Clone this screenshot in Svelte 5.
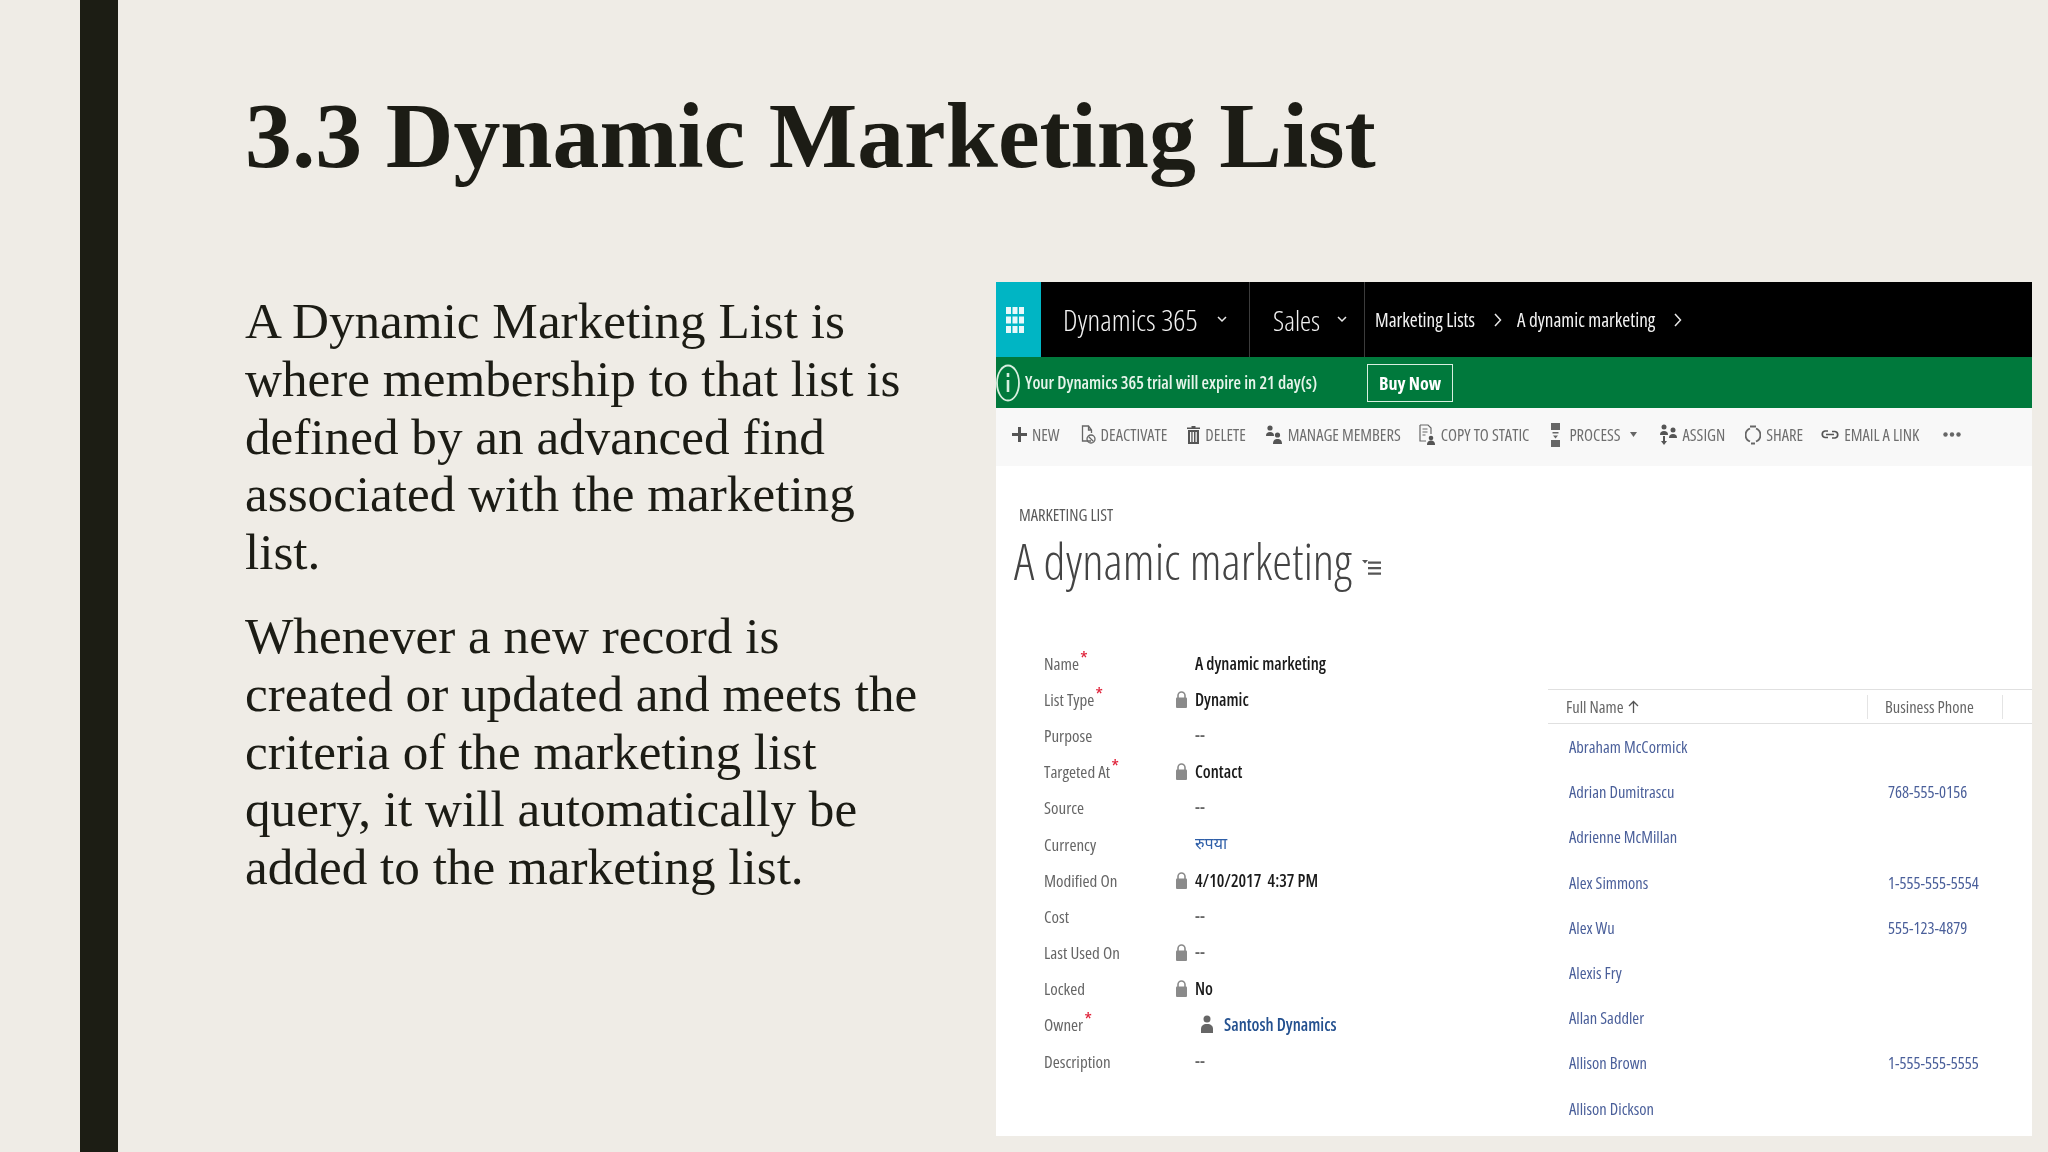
<script lang="ts">
  const fields = [
    { label: "Name", req: true, value: "A dynamic marketing", kind: "strong" },
    { label: "List Type", req: true, lock: true, value: "Dynamic", kind: "strong" },
    { label: "Purpose", value: "--", kind: "dash" },
    { label: "Targeted At", req: true, lock: true, value: "Contact", kind: "strong" },
    { label: "Source", value: "--", kind: "dash" },
    { label: "Currency", value: "रुपया", kind: "link" },
    { label: "Modified On", lock: true, value: "4/10/2017\u00a0\u00a04:37 PM", kind: "strong" },
    { label: "Cost", value: "--", kind: "dash" },
    { label: "Last Used On", lock: true, value: "--", kind: "dash" },
    { label: "Locked", lock: true, value: "No", kind: "strong" },
    { label: "Owner", req: true, value: "Santosh Dynamics", kind: "owner" },
    { label: "Description", value: "--", kind: "dash" },
  ];

  const contacts = [
    ["Abraham McCormick", ""],
    ["Adrian Dumitrascu", "768-555-0156"],
    ["Adrienne McMillan", ""],
    ["Alex Simmons", "1-555-555-5554"],
    ["Alex Wu", "555-123-4879"],
    ["Alexis Fry", ""],
    ["Allan Saddler", ""],
    ["Allison Brown", "1-555-555-5555"],
    ["Allison Dickson", ""],
  ];
</script>

<div class="page">
  <div class="bar"></div>
  <main class="slide">
    <h1>3.3 Dynamic Marketing List</h1>
    <div class="content">
      <div class="copy">
        <p>A Dynamic Marketing List is where membership to that list is defined by an advanced find associated with the marketing list.</p>
        <p>Whenever a new record is created or updated and meets the criteria of the marketing list query, it will automatically be added to the marketing list.</p>
      </div>

      <div class="shot">
        <nav class="nav">
          <div class="tile">
            <svg width="18" height="26" viewBox="0 0 18 26" fill="#e8f8fa">
              {#each [0, 9.5, 19] as y}
                {#each [0, 6.5, 13] as x}
                  <rect {x} {y} width="5" height="7" />
                {/each}
              {/each}
            </svg>
          </div>
          <div class="product">
            <span>Dynamics 365</span>
            <svg class="caret" width="10" height="7" viewBox="0 0 10 7"><path d="M1 1l4 4 4-4" /></svg>
          </div>
          <div class="area">
            <span>Sales</span>
            <svg class="caret" width="10" height="7" viewBox="0 0 10 7"><path d="M1 1l4 4 4-4" /></svg>
          </div>
          <div class="crumbs">
            <span>Marketing Lists</span>
            <svg class="chev" width="8" height="14" viewBox="0 0 8 14"><path d="M1 1l5.5 6L1 13" /></svg>
            <span>A dynamic marketing</span>
            <svg class="chev" width="8" height="14" viewBox="0 0 8 14"><path d="M1 1l5.5 6L1 13" /></svg>
          </div>
        </nav>

        <div class="notice">
          <svg width="24" height="38" viewBox="0 0 24 38" fill="none" stroke="#d8efe0">
            <ellipse cx="12" cy="19" rx="11" ry="17.5" stroke-width="1.8" />
            <path d="M12 16v12M12 9v4" stroke-width="2.6" />
          </svg>
          <span class="trial">Your Dynamics 365 trial will expire in 21 day(s)</span>
          <span class="buy">Buy Now</span>
        </div>

        <div class="toolbar">
          <div class="tool t-new">
            <svg width="15" height="15" viewBox="0 0 15 15" fill="#555"><path d="M6 0h3v6h6v3H9v6H6V9H0V6h6z" /></svg>
            <span>NEW</span>
          </div>
          <div class="tool t-deactivate">
            <svg width="15" height="20" viewBox="0 0 15 20" fill="none" stroke="#666" stroke-width="1.3"><path d="M10 16H1.500V1h6l3 4v3M7.500 1v4h3" /><circle cx="10" cy="14" r="4" /><path d="M7.500 11.500l5 5" /></svg>
            <span>DEACTIVATE</span>
          </div>
          <div class="tool t-delete">
            <svg width="13" height="18" viewBox="0 0 13 18" fill="#555"><path d="M4.500 0h4v1.500h4.500V3H0V1.500h4.500zM1 4h11v14H1zM3 6v10h1.300V6zm2.600 0v10h1.400V6zm2.900 0v10h1.300V6z" fill-rule="evenodd" /></svg>
            <span>DELETE</span>
          </div>
          <div class="tool t-manage">
            <svg width="18" height="20" viewBox="0 0 18 20" fill="#555"><circle cx="5" cy="3" r="2.600" /><path d="M1 11c0-3 1.500-4 4-4s4 1 4 4z" /><circle cx="12.500" cy="10" r="2.600" /><path d="M8 19c0-4 2-5 4.500-5s4.500 1 4.500 5z" /></svg>
            <span>MANAGE MEMBERS</span>
          </div>
          <div class="tool t-copy">
            <svg width="17" height="22" viewBox="0 0 17 22" fill="none" stroke="#666" stroke-width="1.200"><path d="M1 1h8l3 3v6M1 1v16h6M3.500 5h5M3.500 8h5M3.500 11h3" /><circle cx="12" cy="14" r="2.300" fill="#555" stroke="none" /><path d="M8 21c0-3.500 2-4.500 4-4.500s4 1 4 4.500z" fill="#555" stroke="none" /></svg>
            <span>COPY TO STATIC</span>
          </div>
          <div class="tool t-process">
            <svg width="9" height="24" viewBox="0 0 9 24" fill="#666"><rect width="9" height="7" /><rect y="17" width="9" height="7" /><rect x="1.500" y="9" width="6" height="1.500" /><path d="M4.500 15.500L2 12.500h5z" /></svg>
            <span>PROCESS</span>
            <svg class="drop" width="7" height="5" viewBox="0 0 7 5" fill="#666"><path d="M0 0h7L3.500 5z" /></svg>
          </div>
          <div class="tool t-assign">
            <svg width="19" height="22" viewBox="0 0 19 22" fill="#555"><circle cx="5" cy="3" r="2.500" /><path d="M1 11c0-3 1.500-4 4-4s4 1 4 4z" /><circle cx="14" cy="6" r="2.500" /><path d="M10 14c0-3 1.500-4 4-4s4 1 4 4z" /><path d="M4 12h2v5h2l-3 4-3-4h2z" /></svg>
            <span>ASSIGN</span>
          </div>
          <div class="tool t-share">
            <svg width="16" height="20" viewBox="0 0 16 20" fill="none" stroke="#666" stroke-width="1.800"><path d="M5 3.500A7 7 0 0 0 5 16.500M11 3.500A7 7 0 0 1 11 16.500" /><path d="M5 1.500h6M6 18.500h4" stroke-width="2.200" /></svg>
            <span>SHARE</span>
          </div>
          <div class="tool t-link">
            <svg width="18" height="9" viewBox="0 0 18 9" fill="none" stroke="#555" stroke-width="1.700"><path d="M7 1H4a3.300 3.300 0 0 0 0 6.500h3M11 1.500h3a3.300 3.300 0 0 1 0 6.500h-3M5 4.500h8" /></svg>
            <span>EMAIL A LINK</span>
          </div>
          <div class="tool t-more">
            <svg width="18" height="5" viewBox="0 0 18 5" fill="#666"><circle cx="2.500" cy="2.500" r="2.200" /><circle cx="9" cy="2.500" r="2.200" /><circle cx="15.500" cy="2.500" r="2.200" /></svg>
          </div>
        </div>

        <div class="record">
          <div class="entity">MARKETING LIST</div>
          <div class="record-name">
            <span>A dynamic marketing</span>
            <svg width="19" height="17" viewBox="0 0 19 17" fill="#555"><path d="M0 1h6L3 4.500zM6 2.500h13v2.200H6zM6 8h13v2.200H6zM6 13.500h13v2.200H6z" /></svg>
          </div>

          <div class="record-body">
            <div class="form">
              {#each fields as f}
                <div class="field-label">
                  {f.label}{#if f.req}<span class="req">*</span>{/if}
                </div>
                <div class="field-lock">
                  {#if f.lock}
                    <svg width="11" height="17" viewBox="0 0 11 17"><path d="M2 7V4.500a3.500 3.500 0 0 1 7 0V7" fill="none" stroke="#8a8a8a" stroke-width="1.600" /><rect y="6.500" width="11" height="10.500" rx="1" fill="#8a8a8a" /></svg>
                  {/if}
                </div>
                <div class="field-value {f.kind}">
                  {#if f.kind === "owner"}
                    <svg width="12" height="19" viewBox="0 0 12 19" fill="#666"><circle cx="6" cy="4" r="3.500" /><path d="M0 18v-4c0-3 2-5 6-5s6 2 6 5v4z" /></svg>
                  {/if}
                  <span>{f.value}</span>
                </div>
              {/each}
            </div>

            <div class="grid">
              <div class="grid-head">
                <div class="col-name">Full Name
                  <svg width="11" height="13" viewBox="0 0 11 13" fill="none" stroke="#555" stroke-width="1.300"><path d="M5.500 13V1.500M1 6l4.500-4.500L10 6" /></svg>
                </div>
                <div class="col-phone">Business Phone</div>
              </div>
              {#each contacts as [name, phone]}
                <div class="grid-row">
                  <span class="c-name">{name}</span>
                  <span class="c-phone">{phone}</span>
                </div>
              {/each}
            </div>
          </div>
        </div>
      </div>
    </div>
  </main>
</div>

<style>
  :global(body) {
    margin: 0;
    background: #efece6;
  }
  .page {
    display: flex;
    width: 2048px;
    height: 1152px;
    overflow: hidden;
    background: #efece6;
    color: #1c1c15;
    font-family: "Liberation Serif", serif;
  }
  .bar {
    flex: none;
    width: 38px;
    margin-left: 80px;
    background: #1c1d14;
  }
  .slide {
    flex: 1;
    padding-left: 127px;
  }
  h1 {
    margin: 0;
    padding-top: 82px;
    height: 200px;
    box-sizing: border-box;
    font-size: 93.8px;
    line-height: 106px;
    font-weight: 700;
  }
  .content {
    display: flex;
    padding-top: 82px;
  }
  .copy {
    flex: none;
    width: 751px;
    padding-right: 60px;
    padding-top: 10px;
    box-sizing: border-box;
    font-size: 51.2px;
    line-height: 57.8px;
  }
  .copy p {
    margin: 0 0 26px;
  }

  .shot {
    flex: none;
    width: 1036px;
    height: 854px;
    background: #fff;
    font-family: "Open Sans", sans-serif;
    font-stretch: 75%;
    filter: blur(0.6px);
    display: flex;
    flex-direction: column;
  }
  .nav {
    display: flex;
    height: 75px;
    flex: none;
    background: #000;
    color: #f2f2f2;
  }
  .tile {
    width: 45px;
    box-sizing: border-box;
    padding-left: 10px;
    background: #00b5c4;
    display: flex;
    align-items: center;
  }
  .product,
  .area {
    display: flex;
    align-items: center;
    font-size: 28px;
    font-weight: 300;
    border-right: 1px solid #3c3c3c;
  }
  .product {
    width: 209px;
    padding-left: 22px;
    box-sizing: border-box;
    gap: 19px;
    font-size: 29.8px;
  }
  .area {
    width: 115px;
    padding-left: 23px;
    box-sizing: border-box;
    gap: 17px;
  }
  .caret path,
  .chev path {
    fill: none;
    stroke: #e8e8e8;
    stroke-width: 1.5;
  }
  .chev {
    margin-left: 2px;
    margin-right: -2px;
  }
  .crumbs {
    display: flex;
    align-items: center;
    padding-left: 10px;
    gap: 17px;
    font-size: 19.2px;
  }
  .notice {
    display: flex;
    align-items: center;
    height: 51px;
    flex: none;
    background: #00793c;
    color: #e6f4ea;
    font-size: 17.2px;
    font-weight: 600;
  }
  .trial {
    margin-left: 5px;
  }
  .buy {
    margin-left: 50px;
    width: 86px;
    height: 38px;
    box-sizing: border-box;
    border: 1.5px solid #d8efe0;
    display: flex;
    align-items: center;
    justify-content: center;
    font-size: 18px;
    font-weight: 700;
    color: #fff;
  }
  .toolbar {
    display: flex;
    align-items: center;
    height: 58px;
    box-sizing: border-box;
    flex: none;
    background: #f8f8f8;
    padding: 0 0 5px 16px;
    color: #6e6e6e;
    font-size: 16.5px;
  }
  .tool {
    display: flex;
    align-items: center;
    gap: 5px;
  }
  .t-deactivate { margin-left: 21px; }
  .t-delete { margin-left: 20px; }
  .t-manage { margin-left: 19px; }
  .t-copy { margin-left: 18px; }
  .t-process { margin-left: 22px; gap: 9px; }
  .t-assign { margin-left: 22px; }
  .t-share { margin-left: 20px; }
  .t-link { margin-left: 18px; }
  .t-more { margin-left: 24px; }

  .record {
    flex: 1;
    min-height: 0;
    display: flex;
    flex-direction: column;
  }
  .entity {
    margin: 39px 0 0 23px;
    font-size: 16.5px;
    line-height: 20px;
    color: #5a5a5a;
  }
  .record-name {
    display: flex;
    align-items: center;
    gap: 10px;
    margin: 2px 0 0 18px;
    font-size: 50px;
    line-height: 68px;
    font-weight: 300;
    color: #444;
  }
  .record-name svg {
    margin-top: 12px;
  }
  .record-body {
    display: flex;
    position: relative;
    flex: 1;
  }
  .form {
    display: grid;
    grid-template-columns: 132px 19px auto;
    grid-auto-rows: 36.2px;
    align-items: center;
    margin: 50px 0 0 48px;
    align-content: start;
    font-size: 17px;
    width: 504px;
    flex: none;
  }
  .field-label {
    color: #666;
  }
  .req {
    color: #e0253c;
    font-size: 20px;
    line-height: 10px;
    vertical-align: 4px;
    margin-left: 1px;
  }
  .field-lock {
    display: flex;
    justify-content: flex-start;
  }
  .field-value {
    display: flex;
    align-items: center;
    color: #1a1a1a;
    font-weight: 600;
  }
  .field-value.dash {
    font-weight: 600;
    color: #666;
    padding-bottom: 2px;
  }
  .field-value.link {
    color: #2f5fa8;
    font-family: "Noto Sans", "Open Sans", sans-serif;
    font-size: 16px;
    font-weight: 400;
    padding-bottom: 3px;
  }
  .field-value.owner {
    color: #23508f;
    margin-left: 6px;
    gap: 11px;
    font-weight: 600;
  }
  .grid {
    flex: 1;
    margin-top: 0;
    padding-top: 94px;
    color: #666;
    font-size: 16.5px;
  }
  .grid-head {
    display: flex;
    align-items: center;
    height: 35px;
    border-top: 1.5px solid #e0e0e0;
    border-bottom: 1.5px solid #e0e0e0;
    box-sizing: border-box;
  }
  .col-name {
    display: flex;
    align-items: center;
    gap: 5px;
    width: 320px;
    box-sizing: border-box;
    padding-left: 18px;
    height: 24px;
    border-right: 1px solid #e4e4e4;
  }
  .col-phone {
    width: 135px;
    box-sizing: border-box;
    padding-left: 17px;
    height: 24px;
    line-height: 24px;
    border-right: 1px solid #e4e4e4;
  }
  .grid-row {
    display: flex;
    align-items: center;
    height: 45.2px;
    color: #4a5f9a;
  }
  .grid-row:first-of-type {
    margin-top: 3px;
  }
  .c-name {
    width: 320px;
    padding-left: 21px;
    box-sizing: border-box;
  }
  .c-phone {
    padding-left: 20px;
  }
</style>
